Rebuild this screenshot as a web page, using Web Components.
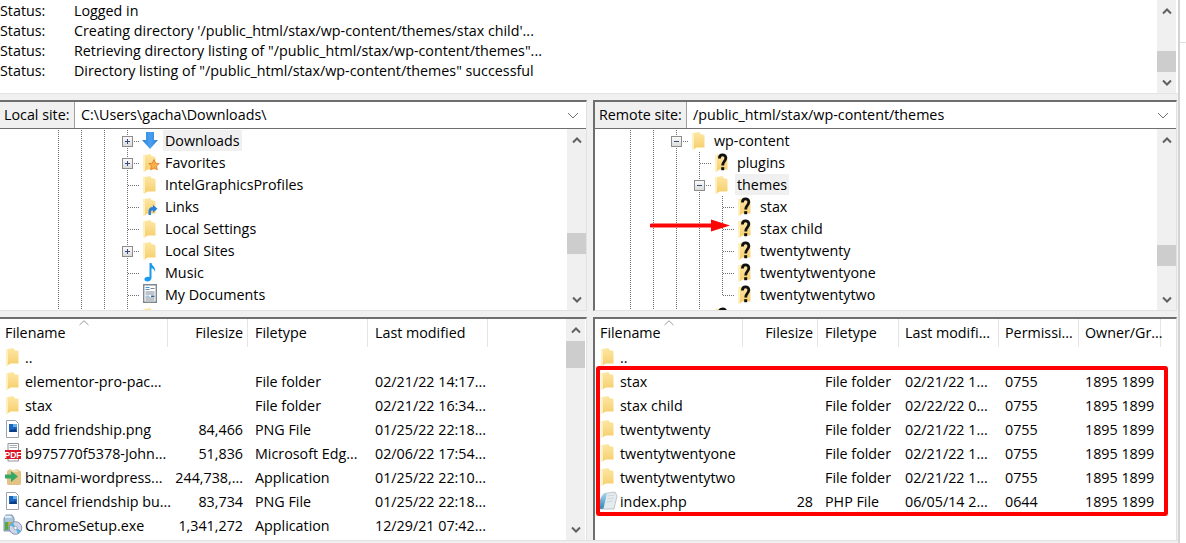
<!DOCTYPE html>
<html>
<head>
<meta charset="utf-8">
<style>
  html, body { margin: 0; background: #fff; overflow: hidden; }
  body { font: 14.3px/20px "Open Sans", "Noto Sans", sans-serif; color: #000; }
  .cols-left { --cols: 168px 80px 120px 120px 77px; }
  .cols-right { --cols: 148px 75px 81px 100px 80px 82px 14px; --late-pad: 6px; }
</style>
</head>
<body>
<ftp-window>
  <ftp-log>
    <log-line status="Status:">Logged in</log-line>
    <log-line status="Status:">Creating directory '/public_html/stax/wp-content/themes/stax child'...</log-line>
    <log-line status="Status:">Retrieving directory listing of "/public_html/stax/wp-content/themes"...</log-line>
    <log-line status="Status:">Directory listing of "/public_html/stax/wp-content/themes" successful</log-line>
  </ftp-log>

  <ftp-pane slot="tl" label="Local site:" path="C:\Users\gacha\Downloads\" thumb="82" style="--inset: 47px">
    <tree-row cols="v v v plus" icon="download" selected>Downloads</tree-row>
    <tree-row cols="v v v plus" icon="favorites">Favorites</tree-row>
    <tree-row cols="v v v tee" icon="folder">IntelGraphicsProfiles</tree-row>
    <tree-row cols="v v v tee" icon="links">Links</tree-row>
    <tree-row cols="v v v tee" icon="folder">Local Settings</tree-row>
    <tree-row cols="v v v plus" icon="folder">Local Sites</tree-row>
    <tree-row cols="v v v tee" icon="music">Music</tree-row>
    <tree-row cols="v v v tee" icon="doc">My Documents</tree-row>
    <tree-row cols="v v v tee" icon="folder"></tree-row>
  </ftp-pane>

  <ftp-pane slot="tr" label="Remote site:" path="/public_html/stax/wp-content/themes" thumb="94" remote style="--inset: 24px">
    <tree-row cols="v v minus" icon="folder">wp-content</tree-row>
    <tree-row cols="v v v tee" icon="unknown">plugins</tree-row>
    <tree-row cols="v v v minus" icon="folder" selected>themes</tree-row>
    <tree-row cols="v v v v tee" icon="unknown">stax</tree-row>
    <tree-row cols="v v v v tee" icon="unknown">stax child</tree-row>
    <tree-row cols="v v v v tee" icon="unknown">twentytwenty</tree-row>
    <tree-row cols="v v v v tee" icon="unknown">twentytwentyone</tree-row>
    <tree-row cols="v v v v elbow" icon="unknown">twentytwentytwo</tree-row>
    <tree-row cols="v v v tee" icon="unknown"></tree-row>
  </ftp-pane>

  <ftp-list slot="bl" class="cols-left" scroll="23">
    <list-head><span>Filename<sort-caret style="left: 79px"></sort-caret></span><span class="num">Filesize</span><span>Filetype</span><span>Last modified</span></list-head>
    <list-row icon="folder">..</list-row>
    <list-row icon="folder">elementor-pro-pac...<span></span><span>File folder</span><span>02/21/22 14:17...</span></list-row>
    <list-row icon="folder">stax<span></span><span>File folder</span><span>02/21/22 16:34...</span></list-row>
    <list-row icon="image">add friendship.png<span class="num">84,466</span><span>PNG File</span><span>01/25/22 22:18...</span></list-row>
    <list-row icon="pdf">b975770f5378-John...<span class="num">51,836</span><span>Microsoft Edg...</span><span>02/06/22 17:54...</span></list-row>
    <list-row icon="bitnami">bitnami-wordpress...<span class="num">244,738,...</span><span>Application</span><span>01/25/22 22:10...</span></list-row>
    <list-row icon="image">cancel friendship bu...<span class="num">83,734</span><span>PNG File</span><span>01/25/22 22:18...</span></list-row>
    <list-row icon="setup">ChromeSetup.exe<span class="num">1,341,272</span><span>Application</span><span>12/29/21 07:42...</span></list-row>
  </ftp-list>

  <ftp-list slot="br" class="cols-right" remote>
    <list-head><span>Filename<sort-caret style="left: 69px"></sort-caret></span><span class="num">Filesize</span><span>Filetype</span><span>Last modifi...</span><span>Permissi...</span><span>Owner/Gr...</span></list-head>
    <list-row icon="folder">..</list-row>
    <list-row icon="folder">stax<span></span><span>File folder</span><span>02/21/22 1...</span><span>0755</span><span>1895 1899</span></list-row>
    <list-row icon="folder">stax child<span></span><span>File folder</span><span>02/22/22 0...</span><span>0755</span><span>1895 1899</span></list-row>
    <list-row icon="folder">twentytwenty<span></span><span>File folder</span><span>02/21/22 1...</span><span>0755</span><span>1895 1899</span></list-row>
    <list-row icon="folder">twentytwentyone<span></span><span>File folder</span><span>02/21/22 1...</span><span>0755</span><span>1895 1899</span></list-row>
    <list-row icon="folder">twentytwentytwo<span></span><span>File folder</span><span>02/21/22 1...</span><span>0755</span><span>1895 1899</span></list-row>
    <list-row icon="php">index.php<span class="num">28</span><span>PHP File</span><span>06/05/14 2...</span><span>0644</span><span>1895 1899</span></list-row>
  </ftp-list>

  <red-arrow slot="over"></red-arrow>
  <red-box slot="over"></red-box>
</ftp-window>

<script>
(function () {
  const folderBody = `
    <path d="M1 1.200 8.500 0l1 2 4 1v12.500H5.600L2.500 17.500 1 17z" fill="url(#fg)"/>
    <path d="M1 1.200 3 .9V16L2.500 17.500 1 17z" fill="#fff0bd"/>`

  const icons = {
    folder: folderBody,
    unknown: folderBody + `
      <path d="M5.400 4.400C5.400-.2 11.800-.2 11.800 4 11.800 7.600 8.700 7.200 8.700 11.500" fill="none" stroke="#111" stroke-width="2.800"/>
      <rect x="7.200" y="13.200" width="3" height="3" fill="#111"/>`,
    favorites: folderBody + `
      <path d="M12 5.500l1.600 3.700 3.600.4-2.700 2.500.8 3.700-3.300-1.900-3.300 1.900.8-3.700-2.700-2.500 3.600-.4z" fill="#f7b04a" stroke="#e2762a" stroke-width=".8"/>`,
    links: folderBody + `
      <path d="M6.500 17v-3.600c0-2.900 1.900-4.400 4.400-4.400V6.800l4.600 4-4.600 4v-2.500c-1.400 0-2 .9-2 2.200V17z" fill="#2b7fd4"/>`,
    download: `
      <path d="M4 0h8v8h4l-8 9-8-9h4z" fill="url(#bl)"/>`,
    music: `
      <path d="M7.500-1h2c.3 3 4.500 4 3.500 9-.6-2.500-2-3.500-3.500-3.800V14c0 2-2 3.400-4 3.400s-3.600-1-3-2.700c.6-1.600 3-2.400 5-1.600z" fill="#1a9aef"/>`,
    doc: `
      <path d="M1.700-1.300h12.600v17.600H1.700z" fill="#fff" stroke="#7f8890" stroke-width="1.400"/>
      <path d="M3.500 1.500h4M3.500 3.500h4" stroke="#4d8fd0"/>
      <path d="M8.500 2.500h4M3.500 6h9M3.500 8h9M3.500 12h9M3.500 14h9" stroke="#7d8894"/>
      <path d="M9 9.500h3.500V11H9z" fill="#35638f"/><path d="M3.500 9.500h4V11h-4z" fill="#9fc4e4"/>`,
    image: `
      <path d="M1.500.5h9l3 3v14h-12z" fill="#fff" stroke="#98a4b0"/>
      <path d="M4 4h8v8H4z" fill="#1a66c0"/>
      <path d="M4 12l2.500-3 1.500 1.200 2-2 2 3.800z" fill="#0e3c80"/>
      <path d="M8 4h4v3H8z" fill="#6aaee6"/>`,
    pdf: `
      <path d="M3 -.500h10.500v17.500H3z" fill="#fff" stroke="#8f959b"/>
      <path d="M4.500 1.500h7.500M4.500 3.500h7.500" stroke="#a9aeb3"/>
      <rect x="0" y="6" width="16" height="9" fill="#d8192a"/>
      <text x="8" y="13.600" text-anchor="middle" font-family="Liberation Sans, sans-serif" font-weight="700" font-size="8.500" fill="#fff">PDF</text>`,
    bitnami: `
      <path d="M2 3 5 1l3 1.500L12 1l4 2.500V16l-1 1H3l-1-1z" fill="#e4c286"/>
      <path d="M5 1l3 1.500L12 1l1.500 3h-7z" fill="#f2dcae"/>
      <path d="M0 6.500h6V3l7 5.500-7 5.500v-3.500H0z" fill="#35a866"/>`,
    setup: `
      <path d="M-1 2 1-1h6l2 3v13H-1z" fill="#aac4dc" stroke="#5f7f9f" stroke-width=".8"/>
      <path d="M0-.200h6l1 2H-.5z" fill="#e6f1fa"/>
      <path d="M0 6h3.500v8H0z" fill="#5aa83e"/><path d="M3.500 6H7v4H3.500z" fill="#d8a93c"/>
      <circle cx="10.500" cy="12" r="6.300" fill="#cfd6ea" stroke="#76819c" stroke-width=".8"/>
      <path d="M10.500 12 5 9.500a6.300 6.300 0 0 1 3-3.400zM10.500 12l5.500 2.500a6.300 6.300 0 0 1-3 3.400z" fill="#5bb4dc"/>
      <circle cx="10.500" cy="12" r="1.700" fill="#fff" stroke="#76819c" stroke-width=".6"/>`,
    php: `
      <path d="M4 1.500 15 0l2 4-3 13H1z" fill="#e6ecee" stroke="#9aa6ac" stroke-width=".6"/>
      <path d="M-1 13C-1 8 2 3 4 1.500L7 1.200 3.500 16.500 0 17z" fill="url(#ph)"/>
      <path d="M7.500 4 14.500 3M7 7l7-1M6.500 10l6.500-1" stroke="#cdd6da"/>`
  }

  customElements.define('ftp-icon', class extends HTMLElement {
    connectedCallback() {
      const name = this.getAttribute('name')
      this.attachShadow({ mode: 'open' }).innerHTML = `
        <style>
          :host { display: block; width: 16px; height: 18px; flex: none; }
          svg { display: block; overflow: visible; }
        </style>
        <svg width="16" height="18" viewBox="0 0 16 18">
          <defs>
            <linearGradient id="fg" x1="0" y1="0" x2="0" y2="1">
              <stop offset="0" stop-color="#fde7a4"/><stop offset="1" stop-color="#f6ce6c"/>
            </linearGradient>
            <linearGradient id="bl" x1="0" y1="0" x2="1" y2="0">
              <stop offset="0" stop-color="#2a80da"/><stop offset=".5" stop-color="#4aa0ee"/><stop offset="1" stop-color="#2a80da"/>
            </linearGradient>
            <linearGradient id="ph" x1="0" y1="0" x2="0" y2="1">
              <stop offset="0" stop-color="#a9d6ea"/><stop offset="1" stop-color="#2f86b8"/>
            </linearGradient>
          </defs>
          ${icons[name] || ''}
        </svg>`
    }
  })

  customElements.define('ftp-window', class extends HTMLElement {
    constructor() {
      super()
      this.attachShadow({ mode: 'open' }).innerHTML = `
        <style>
          :host { display: flex; position: relative; width: 1186px; height: 543px; overflow: hidden; }
          .main { width: 1178px; height: 543px; background: #f0f0f0; display: flex; flex-direction: column; }
          .gutter { flex: 1; border-left: 2px solid #d4d4d4; box-sizing: border-box; }
          .gutter i { display: block; height: 42px; border-bottom: 1px solid #e0e0e0; }
          .row { display: grid; grid-template-columns: 587px 584px; column-gap: 6px; }
          .top { height: 211px; margin-top: 6px; }
          .bottom { height: 223px; margin-top: 6px; }
          .foot { height: 3px; border-top: 1px solid #e2e2e2; }
        </style>
        <div class="main">
          <slot></slot>
          <div class="row top"><slot name="tl"></slot><slot name="tr"></slot></div>
          <div class="row bottom"><slot name="bl"></slot><slot name="br"></slot></div>
          <div class="foot"></div>
        </div>
        <div class="gutter"><i></i></div>
        <slot name="over"></slot>`
    }
  })

  customElements.define('ftp-scrollbar', class extends HTMLElement {
    connectedCallback() {
      const thumb = this.getAttribute('thumb') || 0
      const size = this.getAttribute('size') || 21
      this.attachShadow({ mode: 'open' }).innerHTML = `
        <style>
          :host { display: flex; flex-direction: column; width: 19px; flex: none; background: #f0f0f0; }
          .btn { height: 22px; flex: none; display: flex; align-items: center; justify-content: center; }
          .track { flex: 1; min-height: 0; }
          .thumb { height: ${size}px; margin-top: ${thumb}px; background: #cdcdcd; }
          svg { display: block; }
        </style>
        <div class="btn"><svg width="10" height="7" viewBox="0 0 10 7"><path d="M1 5.500 5 1.500l4 4" fill="none" stroke="#606060" stroke-width="2"/></svg></div>
        <div class="track"><div class="thumb"></div></div>
        <div class="btn"><svg width="10" height="7" viewBox="0 0 10 7"><path d="M1 1.500 5 5.500l4-4" fill="none" stroke="#606060" stroke-width="2"/></svg></div>`
    }
  })

  customElements.define('ftp-log', class extends HTMLElement {
    constructor() {
      super()
      this.attachShadow({ mode: 'open' }).innerHTML = `
        <style>
          :host { display: flex; height: 94px; flex: none; background: #fff; box-sizing: border-box; border-bottom: 1px solid #e4e4e4; }
          .lines { flex: 1; padding-top: 1px; overflow: hidden; }
          ftp-scrollbar { margin-right: 2px; }
        </style>
        <div class="lines"><slot></slot></div>
        <ftp-scrollbar thumb="29"></ftp-scrollbar>`
    }
  })

  customElements.define('log-line', class extends HTMLElement {
    connectedCallback() {
      this.attachShadow({ mode: 'open' }).innerHTML = `
        <style>
          :host { display: grid; grid-template-columns: 74px 1fr; height: 20px; white-space: nowrap; }
        </style>
        <span>${this.getAttribute('status')}</span><span><slot></slot></span>`
    }
  })

  customElements.define('ftp-pane', class extends HTMLElement {
    connectedCallback() {
      const remote = this.hasAttribute('remote')
      this.attachShadow({ mode: 'open' }).innerHTML = `
        <style>
          :host { display: flex; flex-direction: column; height: 211px; overflow: hidden; background: #fff;
                  box-sizing: border-box; border-top: 2px solid #6e6e6e;
                  border-bottom: 1px solid #e2e2e2; border-left: ${remote ? '2px solid #6e6e6e' : '0'};
                  border-right: 1px solid #e2e2e2; }
          .bar { display: flex; height: 27px; flex: none; border-bottom: 1px solid #6e6e6e; box-sizing: border-box; }
          .label { background: #f0f0f0; border-right: 1px solid #a0a0a0; padding-left: 4px;
                   width: ${remote ? '92px' : '75px'}; box-sizing: border-box; line-height: 26px; white-space: nowrap; }
          .path { flex: 1; padding-left: 6px; line-height: 26px; white-space: nowrap; }
          .chev { width: 19px; display: flex; align-items: center; }
          .body { flex: 1; display: flex; min-height: 0; }
          .tree { flex: 1; padding: 1px 0 0 var(--inset); overflow: hidden; display: flex; flex-direction: column; }
        </style>
        <div class="bar">
          <div class="label">${this.getAttribute('label')}</div>
          <div class="path">${this.getAttribute('path')}</div>
          <div class="chev"><svg width="12" height="7" viewBox="0 0 12 7"><path d="M1 1l5 5 5-5" fill="none" stroke="#707070"/></svg></div>
        </div>
        <div class="body">
          <div class="tree"><slot></slot></div>
          <ftp-scrollbar thumb="${this.getAttribute('thumb')}"></ftp-scrollbar>
        </div>`
    }
  })

  customElements.define('tree-row', class extends HTMLElement {
    connectedCallback() {
      const cols = (this.getAttribute('cols') || '').split(' ').map(c => {
        if (c === 'plus' || c === 'minus') {
          return `<div class="col v h"><div class="exp">${c === 'plus' ? '<b class="up"></b>' : ''}<b></b></div></div>`
        }
        const cls = { v: 'v', tee: 'v h', elbow: 'e h' }[c]
        return `<div class="col ${cls}"></div>`
      }).join('')
      const sel = this.hasAttribute('selected')
      this.attachShadow({ mode: 'open' }).innerHTML = `
        <style>
          :host { display: flex; height: 22px; flex: none; white-space: nowrap; align-items: stretch; }
          .col { width: 23px; flex: none; background-repeat: no-repeat; display: flex; align-items: center; }
          .v { background-image: repeating-linear-gradient(to bottom, #6f6f6f 0 1px, transparent 1px 2px); background-size: 1px 100%; background-position: 11px 0; }
          .e { background-image: repeating-linear-gradient(to bottom, #6f6f6f 0 1px, transparent 1px 2px); background-size: 1px 11px; background-position: 11px 0; }
          .h { position: relative; }
          .h::after { content: ""; position: absolute; left: 12px; top: 11px; width: 11px; height: 1px;
                      background: repeating-linear-gradient(to right, #6f6f6f 0 1px, transparent 1px 2px); }
          .exp { width: 9px; height: 9px; margin-left: 6px; border: 1px solid #8c8c8c; position: relative; z-index: 1;
                 background: linear-gradient(#fafafa, #dcdcdc); }
          .exp b { position: absolute; left: 2px; top: 4px; width: 5px; height: 1px; background: #36497a; }
          .exp b.up { left: 4px; top: 2px; width: 1px; height: 5px; }
          ftp-icon { margin: 2px 0 0 3px; }
          .text { margin-left: 5px; padding: 0 2px; height: 21px; line-height: 21px; background: ${sel ? '#f0f0f0' : 'transparent'}; }
        </style>
        ${cols}
        <ftp-icon name="${this.getAttribute('icon')}"></ftp-icon>
        <div class="text"><slot></slot></div>`
    }
  })

  customElements.define('ftp-list', class extends HTMLElement {
    connectedCallback() {
      const remote = this.hasAttribute('remote')
      const scroll = this.getAttribute('scroll')
      this.attachShadow({ mode: 'open' }).innerHTML = `
        <style>
          :host { display: flex; height: 223px; background: #fff; box-sizing: border-box; overflow: hidden;
                  border-top: 2px solid #6e6e6e; border-left: ${remote ? '2px solid #6e6e6e' : '0'};
                  border-right: 1px solid #e2e2e2; }
          .rows { flex: 1; min-width: 0; overflow: hidden; }
        </style>
        <div class="rows"><slot></slot></div>
        ${scroll ? `<ftp-scrollbar thumb="0" size="27" style="margin-right:1px"></ftp-scrollbar>` : ''}`
    }
  })

  customElements.define('list-head', class extends HTMLElement {
    constructor() {
      super()
      this.attachShadow({ mode: 'open' }).innerHTML = `
        <style>
          :host { display: grid; grid-template-columns: var(--cols); height: 27px; white-space: nowrap; }
          ::slotted(span) { position: relative; min-width: 0; padding-left: 7px; line-height: 28px; border-right: 1px solid #e5e5e5; }
          ::slotted(span:first-child) { padding-left: 5px; }
          ::slotted(span:nth-child(n+4)) { padding-left: var(--late-pad, 7px); }
          ::slotted(.num) { text-align: right; padding: 0 4px 0 0; }
        </style>
        <slot></slot>`
    }
  })

  customElements.define('sort-caret', class extends HTMLElement {
    constructor() {
      super()
      this.attachShadow({ mode: 'open' }).innerHTML = `
        <style>:host { position: absolute; top: 1px; width: 10px; height: 6px; }</style>
        <svg width="10" height="6" viewBox="0 0 10 6" style="display:block"><path d="M.5 5 5 .8 9.500 5" fill="none" stroke="#9a9a9a"/></svg>`
    }
  })

  customElements.define('list-row', class extends HTMLElement {
    connectedCallback() {
      // the spans are the grid cells, the bare text stays in the name cell
      ;[...this.children].forEach(c => c.setAttribute('slot', 'cells'))
      this.attachShadow({ mode: 'open' }).innerHTML = `
        <style>
          :host { display: grid; grid-template-columns: var(--cols); height: 24px; line-height: 24px; white-space: nowrap; }
          .name { display: flex; align-items: center; }
          ftp-icon { margin: 0 4px 2px 5px; }
          ::slotted(span) { padding-left: 7px; }
          ::slotted(span:nth-child(n+3)) { padding-left: var(--late-pad, 7px); }
          ::slotted(.num) { text-align: right; padding: 0 5px 0 0; }
        </style>
        <div class="name"><ftp-icon name="${this.getAttribute('icon')}"></ftp-icon><slot></slot></div>
        <slot name="cells"></slot>`
    }
  })

  customElements.define('red-arrow', class extends HTMLElement {
    constructor() {
      super()
      this.attachShadow({ mode: 'open' }).innerHTML = `
        <style>:host { position: absolute; left: 650px; top: 219px; width: 81px; height: 13px; }</style>
        <svg width="81" height="13" viewBox="0 0 81 13" style="display:block"><path d="M1.500 4.500H61V.5l19 6-19 6v-4H1.500a2 2 0 0 1 0-4z" fill="#fb0606"/></svg>`
    }
  })

  customElements.define('red-box', class extends HTMLElement {
    constructor() {
      super()
      this.attachShadow({ mode: 'open' }).innerHTML = `
        <style>:host { position: absolute; left: 596px; top: 366px; width: 572px; height: 150px; box-sizing: border-box; border: 4px solid #fe0000; border-radius: 3px; }</style>`
    }
  })
})();
</script>
</body>
</html>
